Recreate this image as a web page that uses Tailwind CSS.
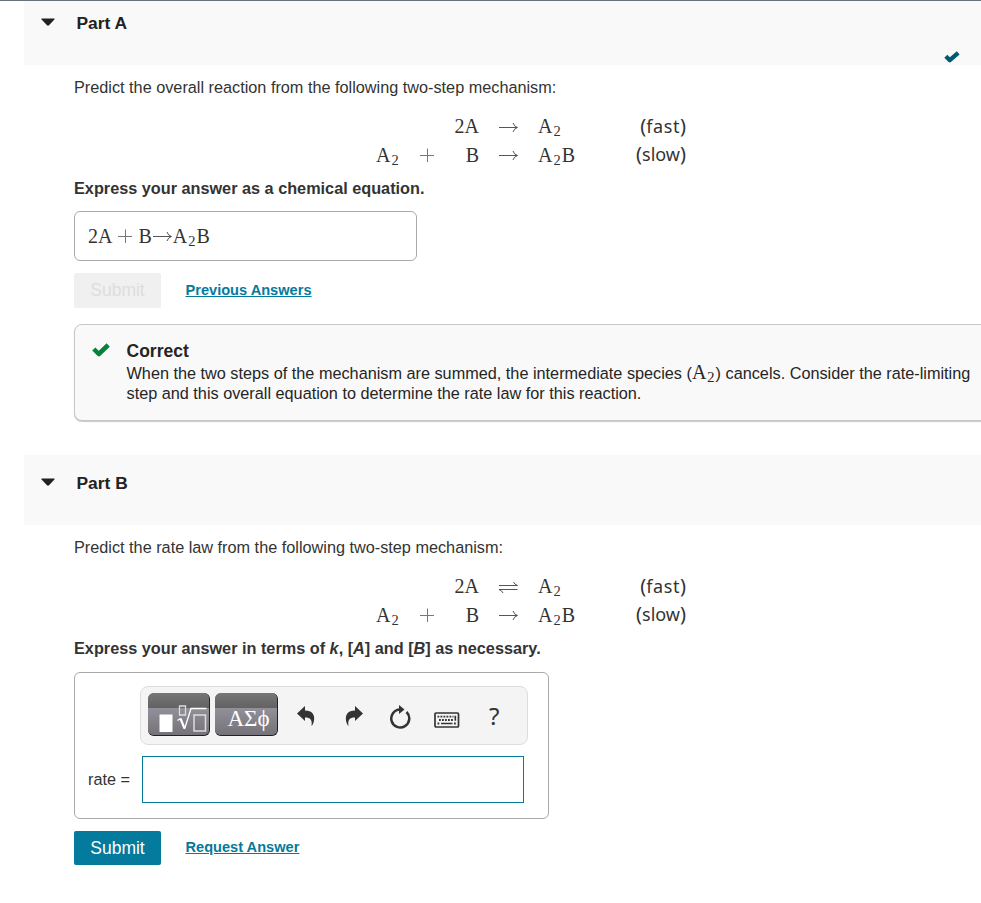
<!DOCTYPE html>
<html lang="en">
<head>
    <meta charset="UTF-8">
    <meta name="viewport" content="width=device-width, initial-scale=1.0">
    <title>Two-Step Mechanism</title>
    <script src="https://cdn.jsdelivr.net/npm/@tailwindcss/browser@4"></script>
</head>
<body class="bg-white text-[#333] text-[16.25px] font-['Liberation_Sans',Arial,sans-serif] overflow-hidden">

    <div class="w-[981px] h-[903px] border-t border-[#67727e] overflow-hidden">

        <!-- Part A -->
        <section>
            <header class="ml-6 h-16 bg-[#f9f9f9] flex justify-between">
                <div class="flex items-center h-11 pl-[17px]">
                    <svg class="w-[14px] h-2 mb-[2px]" viewBox="0 0 14 8" fill="#222"><path d="M.8.5h12.4q.8.2.2.9L8 7.2q-1 .9-2 0L.6 1.4Q0 .7.8.5z"/></svg>
                    <h2 class="ml-[21.5px] text-[17.4px] font-bold text-[#222]">Part A</h2>
                </div>
                <svg class="w-4 h-3 mt-[50px] mr-[21px]" viewBox="0 0 16 12" fill="none" stroke="#005a70" stroke-width="4.200" stroke-linejoin="round"><path d="M1.800 5.200 5.800 9.200 14.200 1.800"/></svg>
            </header>

            <div class="pl-[74px]">
                <p class="h-[46px] leading-[44px] whitespace-nowrap">Predict the overall reaction from the following two-step mechanism:</p>

                <div class="mt-px ml-[302px] grid grid-cols-[44px_14px_45px_59px_56px_92px] auto-rows-[28.5px] items-center font-['Liberation_Serif',serif] text-[20px] leading-[28px] w-[310px]">
                    <span></span>
                    <span></span>
                    <span class="text-right">2A</span>
                    <svg class="w-5 h-3 ml-5 mt-px" viewBox="0 0 20 12" fill="none" stroke="#555"><path d="M0 6.5h18M14 2q1 3.5 4.5 4.5Q15 7.500 14 11"/></svg>
                    <span>A<sub class="text-[14.5px] bottom-[-3px] ml-px">2</sub></span>
                    <span class="-mt-px text-right font-['Noto_Sans',sans-serif] text-[18px]"><span class="text-[20px]">(</span><span class="tracking-[.6px]">fast</span><span class="text-[20px]">)</span></span>

                    <span>A<sub class="text-[14.5px] bottom-[-3px] ml-px">2</sub></span>
                    <svg class="w-[14px] h-[14px]" viewBox="0 0 14 14" stroke="#777"><path d="M0 7.500h14M7.500 .5v14"/></svg>
                    <span class="text-right">B</span>
                    <svg class="w-5 h-3 ml-5" viewBox="0 0 20 12" fill="none" stroke="#555"><path d="M0 6.5h18M14 2q1 3.5 4.5 4.5Q15 7.500 14 11"/></svg>
                    <span>A<sub class="text-[14.5px] bottom-[-3px] mx-px">2</sub>B</span>
                    <span class="-mt-px text-right font-['Noto_Sans',sans-serif] text-[18px]"><span class="text-[20px]">(</span>slow<span class="text-[20px]">)</span></span>
                </div>

                <p class="h-10 leading-[38px] font-bold whitespace-nowrap">Express your answer as a chemical equation.</p>

                <div class="mt-[2px] w-[343px] h-[50px] border border-[#aaa] rounded-md pl-[13px] flex items-center font-['Liberation_Serif',serif] text-[20px]">
                    <span>2A</span>
                    <svg class="w-[14px] h-[14px] mx-[6px]" viewBox="0 0 14 14" stroke="#777"><path d="M0 7.500h14M7.500 .5v14"/></svg>
                    <span>B</span>
                    <svg class="w-5 h-3 ml-px" viewBox="0 0 20 12" fill="none" stroke="#555"><path d="M0 6.5h18M14 2q1 3.5 4.5 4.5Q15 7.500 14 11"/></svg>
                    <span>A<sub class="text-[14.5px] bottom-[-3px] mx-px">2</sub>B</span>
                </div>

                <div class="mt-3 flex items-center">
                    <button class="w-[87px] h-[35px] bg-[#f0f0f0] text-[#ddd] text-[17.5px] rounded-xs">Submit</button>
                    <a href="#" class="ml-[24.5px] text-[14.6px] font-bold text-[#047a9c] underline">Previous Answers</a>
                </div>

                <!-- Feedback -->
                <div class="mt-4 h-[97px] w-[960px] flex border border-[#c7c7c7] shadow-[0_1px_1px_#c7c7c7] rounded-lg bg-[#f9f9f9] pl-[17px] text-[#252525]">
                    <svg class="w-[18px] h-[14px] mt-[18px]" viewBox="0 0 18 14" fill="none" stroke="#038238" stroke-width="4.500" stroke-linejoin="round"><path d="M1.800 6 6.800 11 16.200 2"/></svg>
                    <div class="ml-[16.500px] mt-4 whitespace-nowrap">
                        <h3 class="text-[17.500px] font-bold leading-[21px]">Correct</h3>
                        <p class="h-[22px] leading-[23px]">When the two steps of the mechanism are summed, the intermediate species (<span class="font-['Liberation_Serif',serif] text-[20px] leading-none">A<sub class="text-[14.5px] bottom-[-3px] mx-px">2</sub></span>) cancels. Consider the rate-limiting</p>
                        <p class="leading-[18px]">step and this overall equation to determine the rate law for this reaction.</p>
                    </div>
                </div>
            </div>
        </section>

        <!-- Part B -->
        <section class="mt-[34px]">
            <header class="ml-6 h-[70px] bg-[#f9f9f9]">
                <div class="flex items-center h-[57px] pl-[17px]">
                    <svg class="w-[14px] h-2 mb-1" viewBox="0 0 14 8" fill="#222"><path d="M.8.5h12.4q.8.2.2.9L8 7.2q-1 .9-2 0L.6 1.4Q0 .7.8.5z"/></svg>
                    <h2 class="ml-[21.5px] text-[17.4px] font-bold text-[#222]">Part B</h2>
                </div>
            </header>

            <div class="pl-[74px]">
                <p class="h-[46px] leading-[44px] whitespace-nowrap">Predict the rate law from the following two-step mechanism:</p>

                <div class="mt-px ml-[302px] grid grid-cols-[44px_14px_45px_59px_56px_92px] auto-rows-[28.5px] items-center font-['Liberation_Serif',serif] text-[20px] leading-[28px] w-[310px]">
                    <span></span>
                    <span></span>
                    <span class="text-right">2A</span>
                    <svg class="w-5 h-3 ml-5 mt-px" viewBox="0 0 20 12" fill="none" stroke="#555"><path d="M0 4.500h18.500Q15.500 3.500 14.500 1M18.500 8.500H0Q3 9.500 4 12"/></svg>
                    <span>A<sub class="text-[14.5px] bottom-[-3px] ml-px">2</sub></span>
                    <span class="-mt-px text-right font-['Noto_Sans',sans-serif] text-[18px]"><span class="text-[20px]">(</span><span class="tracking-[.6px]">fast</span><span class="text-[20px]">)</span></span>

                    <span>A<sub class="text-[14.5px] bottom-[-3px] ml-px">2</sub></span>
                    <svg class="w-[14px] h-[14px]" viewBox="0 0 14 14" stroke="#777"><path d="M0 7.500h14M7.500 .5v14"/></svg>
                    <span class="text-right">B</span>
                    <svg class="w-5 h-3 ml-5" viewBox="0 0 20 12" fill="none" stroke="#555"><path d="M0 6.5h18M14 2q1 3.5 4.5 4.5Q15 7.500 14 11"/></svg>
                    <span>A<sub class="text-[14.5px] bottom-[-3px] mx-px">2</sub>B</span>
                    <span class="-mt-px text-right font-['Noto_Sans',sans-serif] text-[18px]"><span class="text-[20px]">(</span>slow<span class="text-[20px]">)</span></span>
                </div>

                <p class="h-10 leading-[38px] font-bold whitespace-nowrap">Express your answer in terms of <i>k</i>, [<i>A</i>] and [<i>B</i>] as necessary.</p>

                <div class="mt-[3px] w-[475px] h-[147px] border border-[#aaa] rounded-md pt-[13px] pl-[13px]">
                    <!-- Toolbar -->
                    <div class="ml-[52px] w-[388px] h-[59px] border border-[#ddd] rounded-lg bg-[#f4f4f4] flex items-start pt-[6px] pl-[7px]">
                        <button class="w-[62px] h-[43px] rounded-md border-r border-b border-[#222] bg-[#6a6a6a] overflow-hidden flex flex-col">
                            <span class="w-full h-[15px] shrink-0 bg-linear-to-b from-[#777] to-[#626262]"></span>
                            <span class="w-full h-7 shrink-0 bg-linear-to-b from-[#929099] to-[#747277]">
                                <svg class="w-[62px] h-[43px] -mt-[15px]" viewBox="0 0 62 43" fill="none" stroke="#fff">
                                    <path d="M11.500 21.500h13v17.500h-13z" fill="#fff" stroke="none"/>
                                    <path d="M31.500 13h6v9h-6z" stroke="#ddd" stroke-width="1.300"/>
                                    <path d="M29.500 27.500 32.500 25.500" stroke-width="1.300"/>
                                    <path d="M32.500 25.500l4 10" stroke-width="2.200"/>
                                    <path d="M36.500 36L43 15.500h15.500" stroke-width="1.300"/>
                                    <path d="M46 22h11.500v16h-11.500z" stroke="#ddd" stroke-width="1.500"/>
                                </svg>
                            </span>
                        </button>
                        <button class="ml-[5px] w-[63px] h-[43px] rounded-md border-r border-b border-[#222] bg-[#6a6a6a] overflow-hidden flex flex-col">
                            <span class="w-full h-[15px] shrink-0 bg-linear-to-b from-[#777] to-[#626262]"></span>
                            <span class="w-full h-7 shrink-0 pl-[5px] bg-linear-to-b from-[#929099] to-[#747277] text-white text-[23px] leading-[22px] font-['Liberation_Serif',serif]">ΑΣϕ</span>
                        </button>
                        <svg class="w-[18px] h-5 ml-[19px] mt-[13px]" viewBox="0 0 18 20" fill="#333"><path d="M8 0v4.500c7 0 10 4 9 10-.5 3-1.500 4.500-2.500 5.500 1-6-1-8.500-6.500-8.500V15L0 7.500z"/></svg>
                        <svg class="w-[18px] h-5 ml-[30px] mt-[13px]" viewBox="0 0 18 20" fill="#333"><path d="M10 0v4.500C3 4.500 0 8.500 1 14.500c.5 3 1.500 4.500 2.500 5.500-1-6 1-8.500 6.500-8.500V15l8-7.500z"/></svg>
                        <svg class="w-[22px] h-6 ml-[26px] mt-[12px]" viewBox="0 0 22 24" fill="none" stroke="#333" stroke-width="2.500"><path d="M17.500 7A9 9 0 1 1 11 4.500"/><path d="M10 0v9L15.500 4.500z" fill="#333" stroke="none"/></svg>
                        <svg class="w-[26px] h-4 ml-[23px] mt-[19px]" viewBox="0 0 26 16" fill="none" stroke="#333">
                            <rect x="1" y="1" width="23.500" height="14" rx="1" stroke-width="1.700"/>
                            <path d="M3.500 4.700h16M5 8h15M3.500 11.500h2M20 11.500h2" stroke-width="1.800" stroke-dasharray="1.800 1.200"/>
                            <path d="M7 11.500h11.500M21.300 3.800v5" stroke-width="1.600"/>
                        </svg>
                        <span class="ml-[29px] mt-[9px] text-[24px] leading-7 font-['Noto_Sans',sans-serif]">?</span>
                    </div>

                    <div class="mt-[11px] flex items-center">
                        <label for="rate" class="w-[54px]">rate =</label>
                        <input type="text" id="rate" class="w-[382px] h-[47px] border border-[#047a9c] bg-white outline-none">
                    </div>
                </div>

                <div class="mt-3 flex items-center">
                    <button class="w-[87px] h-[34px] bg-[#047a9c] text-white text-[17.5px] rounded-xs">Submit</button>
                    <a href="#" class="ml-[24.5px] text-[14.6px] font-bold text-[#047a9c] underline">Request Answer</a>
                </div>
            </div>
        </section>
    </div>

</body>
</html>
